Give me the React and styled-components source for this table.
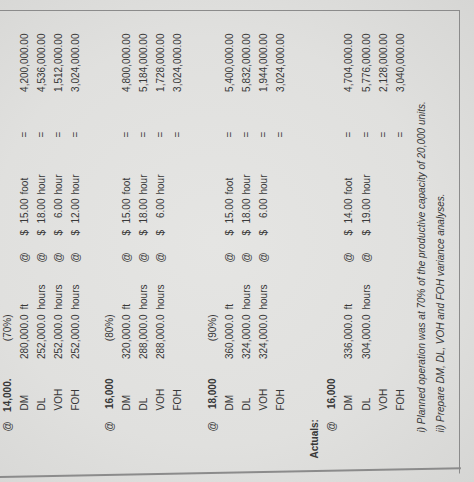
import React from "react";
import styled, { createGlobalStyle } from "styled-components";

const GlobalStyle = createGlobalStyle`
  html, body {
    margin: 0;
    padding: 0;
    background: #dcdcda;
  }
  body {
    font-family: "Liberation Sans", Arial, sans-serif;
  }
`;

const blocks = [
  {
    units: "14,000.",
    pct: "(70%)",
    lines: [
      ["DM", "280,000.0", "ft", "15.00", "foot", "4,200,000.00"],
      ["DL", "252,000.0", "hours", "18.00", "hour", "4,536,000.00"],
      ["VOH", "252,000.0", "hours", "6.00", "hour", "1,512,000.00"],
      ["FOH", "252,000.0", "hours", "12.00", "hour", "3,024,000.00"],
    ],
  },
  {
    units: "16,000",
    pct: "(80%)",
    lines: [
      ["DM", "320,000.0", "ft", "15.00", "foot", "4,800,000.00"],
      ["DL", "288,000.0", "hours", "18.00", "hour", "5,184,000.00"],
      ["VOH", "288,000.0", "hours", "6.00", "hour", "1,728,000.00"],
      ["FOH", null, null, null, null, "3,024,000.00"],
    ],
  },
  {
    units: "18,000",
    pct: "(90%)",
    lines: [
      ["DM", "360,000.0", "ft", "15.00", "foot", "5,400,000.00"],
      ["DL", "324,000.0", "hours", "18.00", "hour", "5,832,000.00"],
      ["VOH", "324,000.0", "hours", "6.00", "hour", "1,944,000.00"],
      ["FOH", null, null, null, null, "3,024,000.00"],
    ],
  },
];

const actuals = {
  units: "16,000",
  lines: [
    ["DM", "336,000.0", "ft", "14.00", "foot", "4,704,000.00"],
    ["DL", "304,000.0", "hours", "19.00", "hour", "5,776,000.00"],
    ["VOH", null, null, null, null, "2,128,000.00"],
    ["FOH", null, null, null, null, "3,040,000.00"],
  ],
};

function Header({ units, pct }) {
  return (
    <Row>
      <Mark $col={3}>@</Mark>
      <Count>{units}</Count>
      {pct && <Qty>{pct}</Qty>}
    </Row>
  );
}

function Line({ line }) {
  const [label, qty, unit, rate, unit2, amount] = line;
  return (
    <Row>
      <Label>{label}</Label>
      {qty && <Qty>{qty}</Qty>}
      {unit && <Unit>{unit}</Unit>}
      {rate && <Mark $col={8}>@</Mark>}
      {rate && (
        <Price>
          <span>$</span>
          <span>{rate}</span>
        </Price>
      )}
      {unit2 && <RateUnit>{unit2}</RateUnit>}
      <Total>
        <span>=</span>
        <span>{amount}</span>
      </Total>
    </Row>
  );
}

export default function App() {
  return (
    <>
      <GlobalStyle />
      <Stage>
        <Sheet>
          <Frame>
            <Table>
              {blocks.map((b) => (
                <React.Fragment key={b.units}>
                  <Header units={b.units} pct={b.pct} />
                  {b.lines.map((l) => (
                    <Line key={l[0]} line={l} />
                  ))}
                  <Row />
                </React.Fragment>
              ))}
              <Row>
                <SectionTitle>Actuals:</SectionTitle>
              </Row>
              <Header units={actuals.units} />
              {actuals.lines.map((l) => (
                <Line key={l[0]} line={l} />
              ))}
            </Table>
            <Notes>
              <Note>
                i) Planned operation was at 70% of the productive capacity of
                20,000 units.
              </Note>
              <Note>ii) Prepare DM, DL, VOH and FOH variance analyses.</Note>
            </Notes>
          </Frame>
        </Sheet>
      </Stage>
    </>
  );
}

const Stage = styled.div`
  width: 474px;
  height: 482px;
  overflow: hidden;
  display: flex;
  align-items: center;
  justify-content: center;
  background: radial-gradient(
    ellipse at 45% 50%,
    #e5e5e3 0%,
    #e0e0de 60%,
    #d6d6d4 100%
  );
`;

// the photo is turned a quarter turn, so the sheet is laid out upright and rotated
const Sheet = styled.div`
  flex: none;
  width: 482px;
  height: 474px;
  box-sizing: border-box;
  padding: 0 10.5px 14px 7.5px;
  transform: rotate(-90deg);
  display: flex;
  flex-direction: column;
  color: #383838;
  font-size: 10px;
`;

// the left edge of the printed frame leans a little in the photo
const Frame = styled.div`
  position: relative;
  flex: 1;
  box-sizing: border-box;
  border: 1.5px solid #8b8b8b;
  border-top: none;
  border-left-color: transparent;

  &::before {
    content: "";
    position: absolute;
    left: -5px;
    top: 0;
    width: 1.5px;
    height: calc(100% + 1.5px);
    background: #8b8b8b;
    transform-origin: top center;
    transform: rotate(-1.1deg);
  }
`;

const Table = styled.div`
  display: flex;
  flex-direction: column;
  margin-top: -1px;
`;

const Row = styled.div`
  display: grid;
  grid-template-columns: 15px 27px 21px 32px 64px 5px 47px 27px 37px 4px 57px 104px 1fr;
  height: 17.1px;
  align-items: center;
  line-height: 12px;
  white-space: nowrap;
`;

const Mark = styled.span`
  grid-column: ${({ $col }) => $col};
`;

const Count = styled.span`
  grid-column: 4;
  justify-self: end;
  font-weight: bold;
`;

const Label = styled.span`
  grid-column: 4;
`;

const Qty = styled.span`
  grid-column: 5;
  justify-self: end;
`;

const Unit = styled.span`
  grid-column: 7;
`;

const Price = styled.span`
  grid-column: 9;
  display: flex;
  justify-content: space-between;
`;

const RateUnit = styled.span`
  grid-column: 11;
`;

const Total = styled.span`
  grid-column: 12;
  display: flex;
  justify-content: space-between;
`;

const SectionTitle = styled.span`
  grid-column: 2 / span 3;
  font-weight: bold;
`;

const Notes = styled.div`
  margin-top: 3px;
  padding-left: 41px;
  display: flex;
  flex-direction: column;
`;

const Note = styled.div`
  line-height: 19px;
  font-style: italic;
  white-space: nowrap;
`;
